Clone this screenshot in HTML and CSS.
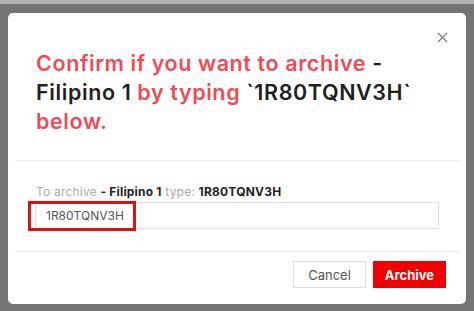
FILE: index.html
```html
<!DOCTYPE html>
<html lang="en">
    <head>
        <meta charset="UTF-8" />
        <meta name="viewport" content="width=device-width,initial-scale=1" />
        <title>Archive</title>
        <link rel="stylesheet" href="styles.css">
    </head>
    <body>
        <div class="topbar"></div>
        <section class="modal">
            <header class="modal-head">
                <button class="close" type="button" aria-label="Close">
                    <svg width="11" height="11" viewBox="0 0 11 11">
                        <path d="M1 1L10 10M10 1L1 10" stroke="#7a7a7a" stroke-width="1.2" fill="none" />
                    </svg>
                </button>
                <h1 class="title">
                    <span class="red">Confirm if you want to archive</span> -
                    Filipino 1 <span class="red">by typing</span> `1R80TQNV3H`
                    <span class="red">below.</span>
                </h1>
            </header>
            <div class="modal-body">
                <label class="hint" for="code">
                    <span class="muted">To archive</span> <b>- Filipino 1</b>
                    <span class="muted">type:</span> <b>1R80TQNV3H</b>
                </label>
                <div class="field">
                    <input id="code" type="text" value="1R80TQNV3H" />
                    <span class="marker"></span>
                </div>
            </div>
            <footer class="modal-foot">
                <button class="btn btn-cancel" type="button">Cancel</button>
                <button class="btn btn-archive" type="button">Archive</button>
            </footer>
        </section>
    </body>
</html>
```

FILE: styles.css
```css
:root {
    --overlay: #747474;
    --red: #f04a55;
    --danger: #f00000;
    --text-main: #1f1f1f;
    --text-sub: #a9a9a9;
    --line: #ececec;
}
html,
body {
    margin: 0;
    background: var(--overlay);
    font-family: Inter, "Noto Sans", Arial, sans-serif;
    color: var(--text-main);
    -webkit-font-smoothing: antialiased;
}
.topbar {
    height: 4px;
    background: #b3b3b3;
}
.modal {
    margin: 9px 8px 0 8px;
    height: 291px;
    box-sizing: border-box;
    background: #fff;
    border-radius: 5px;
    padding: 0 6px 0 7px;
    display: flex;
    flex-direction: column;
}
.modal-head {
    position: relative;
    padding: 36px 20px 24px 21px;
    border-bottom: 1px solid var(--line);
}
.close {
    position: absolute;
    top: 19px;
    right: 12px;
    border: none;
    background: none;
    padding: 0;
    width: 11px;
    height: 11px;
    cursor: pointer;
    display: flex;
}
.title {
    margin: 0;
    font-size: 21.5px;
    font-weight: 600;
    line-height: 29px;
    letter-spacing: 0.6px;
}
.red {
    color: var(--red);
}
.modal-body {
    padding: 23px 21px 22px 20px;
    border-bottom: 1px solid var(--line);
}
.hint {
    display: block;
    font-size: 12px;
    line-height: 16px;
    letter-spacing: 0.2px;
    margin: 0 0 2px 1px;
}
.hint b {
    font-weight: 700;
}
.muted {
    color: var(--text-sub);
}
.field {
    position: relative;
}
.field input {
    display: block;
    width: 100%;
    box-sizing: border-box;
    height: 27px;
    border: 1px solid #dedede;
    padding: 0 10px;
    font: 12px Inter, "Noto Sans", Arial, sans-serif;
    color: #555;
    outline: none;
}
.marker {
    position: absolute;
    left: -7px;
    top: -1px;
    width: 102px;
    height: 24px;
    border: 3px solid #e01010;
}
.modal-foot {
    display: flex;
    justify-content: flex-end;
    gap: 7px;
    padding: 9px 14px 0 0;
}
.btn {
    width: 73px;
    height: 27px;
    font-family: Inter, "Noto Sans", Arial, sans-serif;
    font-size: 13px;
    border-radius: 0;
    cursor: pointer;
}
.btn-cancel {
    background: #fff;
    border: 1px solid #dcdcdc;
    color: #555;
}
.btn-archive {
    background: var(--danger);
    border: 1px solid var(--danger);
    color: #fff;
    font-weight: 700;
}
```
